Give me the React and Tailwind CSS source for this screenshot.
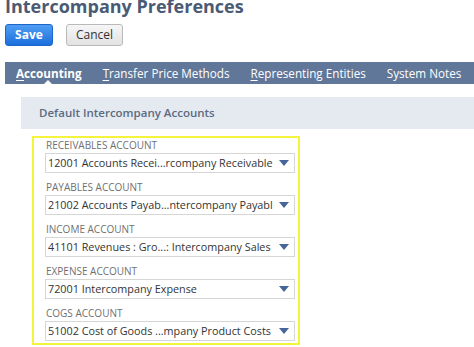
import React from "react";

const fields = [
  ["RECEIVABLES ACCOUNT", "12001 Accounts Recei...rcompany Receivable"],
  ["PAYABLES ACCOUNT", "21002 Accounts Payab...ntercompany Payabl"],
  ["INCOME ACCOUNT", "41101 Revenues : Gro...: Intercompany Sales"],
  ["EXPENSE ACCOUNT", "72001 Intercompany Expense"],
  ["COGS ACCOUNT", "51002 Cost of Goods ...mpany Product Costs"],
];

function Arrow() {
  return (
    <svg width="10" height="6" viewBox="0 0 10 6" className="shrink-0">
      <path d="M0 0 L10 0 L5 6 Z" fill="#46659b" />
    </svg>
  );
}

export default function App() {
  return (
    <div className="w-[474px] h-[347px] bg-white overflow-hidden font-['Open_Sans',sans-serif] relative">
      <h1 className="text-[18px] font-bold leading-[22px] text-[#4a5a75] ml-[5px] mt-[-5px] whitespace-nowrap">
        Intercompany Preferences
      </h1>
      <div className="flex gap-[13px] ml-[5px] mt-[7px]">
        <button className="w-[48px] h-[22px] rounded-[3px] bg-gradient-to-b from-[#4f9df2] to-[#1b6fdc] text-white font-bold text-[12px] leading-[20px] border border-[#1c66c8]">
          Save
        </button>
        <button className="w-[57px] h-[22px] rounded-[3px] bg-gradient-to-b from-[#f6f6f6] to-[#e2e2e2] text-[#333] text-[12px] leading-[20px] border border-[#b9b9b9]">
          Cancel
        </button>
      </div>
      <div className="ml-[5px] mt-[16px] h-[22px] bg-[#607799] flex items-center pl-[11px] gap-[21px] text-[11.7px] text-white whitespace-nowrap">
        <div className="relative font-bold h-[22px] leading-[22px]">
          <span className="underline underline-offset-2">A</span>ccounting
          <div className="absolute left-[28px] bottom-0 w-0 h-0 border-l-[4px] border-r-[4px] border-b-[4px] border-l-transparent border-r-transparent border-b-white" />
        </div>
        <div className="leading-[22px]">
          <span className="underline underline-offset-2">T</span>ransfer Price Methods
        </div>
        <div className="leading-[22px]">
          <span className="underline underline-offset-2">R</span>epresenting Entities
        </div>
        <div className="leading-[22px]">System Notes</div>
      </div>
      <div className="ml-[21px] mt-[13px] h-[32px] bg-[#e5eaf1] flex items-center pl-[18px] text-[11.5px] font-semibold text-[#5c6b80]">
        Default Intercompany Accounts
      </div>
      <div className="ml-[32px] mt-[7px] w-[268px] h-[209px] border-2 border-[#f4f43a] pl-[11px] pt-[1px] flex flex-col gap-[8px]">
        {fields.map(([label, value]) => (
          <div key={label} className="flex flex-col">
            <div className="h-[13px] leading-[13px] text-[10px] text-[#707070] pl-[1px] whitespace-nowrap">{label}</div>
            <div className="mt-[1px] w-[250px] h-[20px] border border-[#d6d6d6] flex items-center justify-between pl-[2px] pr-[5px] text-[10.8px] text-[#333] whitespace-nowrap">
              <span>{value}</span>
              <Arrow />
            </div>
          </div>
        ))}
      </div>
    </div>
  );
}
